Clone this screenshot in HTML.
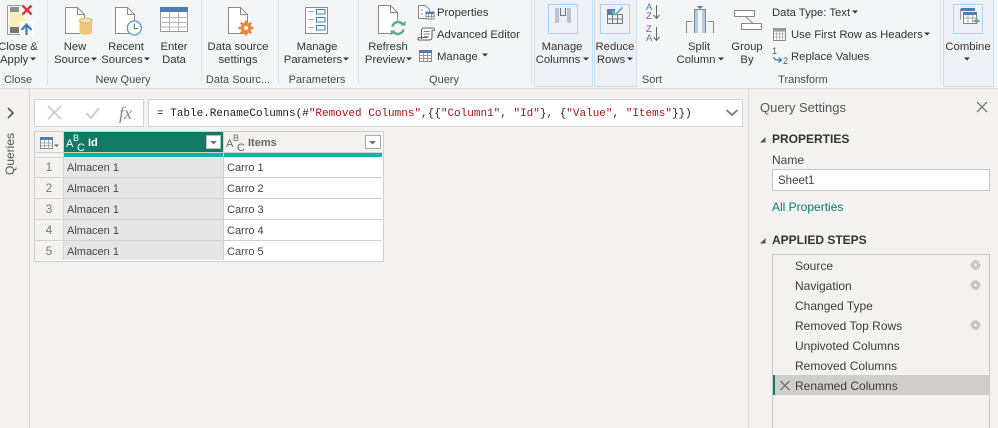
<!DOCTYPE html>
<html><head><meta charset="utf-8"><style>
html,body{margin:0;padding:0;width:998px;height:428px;overflow:hidden}
body{background:#f3f2f1;font-family:"Liberation Sans",sans-serif;color:#333}
#p{position:absolute;left:0;top:0;width:998px;height:428px;overflow:hidden;background:#f3f2f1}
.b{position:absolute}
.t{position:absolute;white-space:nowrap;line-height:16px;font-size:11.3px;color:#333;margin-top:1px}
.c{transform:translateX(-50%)}
.g{color:#4a4a4a;font-size:11px}
.tb{font-size:11px;color:#444}
.st{font-size:12px;left:795px;color:#3b3b3b;margin-top:0}
.n{font-size:12px;color:#777;left:34px;width:30px;text-align:center;margin-top:0}
.r{margin-top:0}
svg{position:absolute;left:0;top:0;overflow:visible}
svg text{font-family:"Liberation Sans",sans-serif}
</style></head><body><div id="p">
<div class="b" style="left:0;top:0;width:998px;height:88px;background:#f3f5f7;border-bottom:1px solid #dedede"></div>
<div class="b" style="left:534px;top:-1px;width:57px;height:86px;background:#eef2f6;border:1px solid #c5dff5"></div>
<div class="b" style="left:594px;top:-1px;width:41px;height:86px;background:#eef2f6;border:1px solid #c5dff5"></div>
<div class="b" style="left:943px;top:-1px;width:49px;height:86px;background:#eef2f6;border:1px solid #c5dff5"></div>
<div class="b" style="left:548px;top:4px;width:28px;height:28px;border:1px solid #a9d0f5"></div>
<div class="b" style="left:600px;top:4px;width:28px;height:28px;border:1px solid #a9d0f5"></div>
<div class="b" style="left:953px;top:4px;width:28px;height:28px;border:1px solid #a9d0f5"></div>
<div class="b" style="left:47px;top:0;width:1px;height:85px;background:#e1e3e5"></div>
<div class="b" style="left:201px;top:0;width:1px;height:85px;background:#e1e3e5"></div>
<div class="b" style="left:278px;top:0;width:1px;height:85px;background:#e1e3e5"></div>
<div class="b" style="left:358px;top:0;width:1px;height:85px;background:#e1e3e5"></div>
<div class="b" style="left:531px;top:0;width:1px;height:85px;background:#e1e3e5"></div>
<div class="b" style="left:940px;top:0;width:1px;height:85px;background:#e1e3e5"></div>
<div class="b" style="left:29px;top:89px;width:1px;height:339px;background:#d6d6d6"></div>
<div class="b" style="left:748px;top:89px;width:1px;height:339px;background:#d6d6d6"></div>

<div class="t c" style="left:18px;top:38px">Close &amp;</div>
<div class="t" style="left:0;top:51px">Apply</div>
<div class="t c" style="left:75px;top:38px">New</div>
<div class="t c" style="left:72px;top:51px">Source</div>
<div class="t c" style="left:126px;top:38px">Recent</div>
<div class="t c" style="left:122px;top:51px">Sources</div>
<div class="t c" style="left:174px;top:38px">Enter</div>
<div class="t c" style="left:174px;top:51px">Data</div>
<div class="t c" style="left:238px;top:38px">Data source</div>
<div class="t c" style="left:238px;top:51px">settings</div>
<div class="t c" style="left:317px;top:38px">Manage</div>
<div class="t c" style="left:313px;top:51px">Parameters</div>
<div class="t c" style="left:388px;top:38px">Refresh</div>
<div class="t c" style="left:385px;top:51px">Preview</div>
<div class="t" style="left:437px;top:4px">Properties</div>
<div class="t" style="left:437px;top:26px">Advanced Editor</div>
<div class="t" style="left:437px;top:48px">Manage</div>
<div class="t c" style="left:562px;top:38px">Manage</div>
<div class="t c" style="left:558px;top:51px">Columns</div>
<div class="t c" style="left:615px;top:38px">Reduce</div>
<div class="t c" style="left:611px;top:51px">Rows</div>
<div class="t c" style="left:699px;top:38px">Split</div>
<div class="t c" style="left:696px;top:51px">Column</div>
<div class="t c" style="left:747px;top:38px">Group</div>
<div class="t c" style="left:747px;top:51px">By</div>
<div class="t" style="left:772px;top:4px">Data Type: Text</div>
<div class="t" style="left:791px;top:26px">Use First Row as Headers</div>
<div class="t" style="left:791px;top:48px">Replace Values</div>
<div class="t c" style="left:968px;top:38px">Combine</div>

<div class="t c g" style="left:18px;top:71px">Close</div>
<div class="t c g" style="left:123px;top:71px">New Query</div>
<div class="t c g" style="left:238px;top:71px">Data Sourc...</div>
<div class="t c g" style="left:317px;top:71px">Parameters</div>
<div class="t c g" style="left:444px;top:71px">Query</div>
<div class="t c g" style="left:652px;top:71px">Sort</div>
<div class="t c g" style="left:803px;top:71px">Transform</div>

<!-- left rail -->
<div class="t r" style="left:-13px;top:146px;width:46px;text-align:center;transform:rotate(-90deg);font-size:12px;color:#555">Queries</div>

<!-- formula bar -->
<div class="b" style="left:34px;top:99px;width:108px;height:26px;background:#fff;border:1px solid #d2d2d2"></div>
<div class="b" style="left:148px;top:99px;width:593px;height:26px;background:#fff;border:1px solid #d2d2d2"></div>
<div class="b" style="left:157px;top:106px;font:11px/16px 'Liberation Mono',monospace;white-space:pre;color:#222">= Table.RenameColumns(#<span style="color:#a31515">"Removed Columns"</span>,{{<span style="color:#a31515">"Column1"</span>, <span style="color:#a31515">"Id"</span>}, {<span style="color:#a31515">"Value"</span>, <span style="color:#a31515">"Items"</span>}})</div>
<div class="t r" style="left:119px;top:104px;font:italic 18px/18px 'Liberation Serif',serif;color:#888">fx</div>

<!-- table -->
<div class="b" style="left:34px;top:131px;width:348px;height:129px;background:#fff;border:1px solid #cfcfcf"></div>
<div class="b" style="left:35px;top:132px;width:28px;height:20px;background:#f3f2f1"></div>
<div class="b" style="left:224px;top:132px;width:158px;height:20px;background:#f3f2f1"></div>
<div class="b" style="left:35px;top:152px;width:347px;height:1px;background:#d2d2d2"></div>
<div class="b" style="left:35px;top:153px;width:28px;height:4px;background:#f3f2f1;border-bottom:1px solid #d2d2d2"></div>
<div class="b" style="left:63px;top:132px;width:160px;height:20px;background:#127a63"></div>
<div class="b" style="left:64px;top:153px;width:318px;height:4px;background:#01b8aa"></div>
<div class="b" style="left:64px;top:158px;width:159px;height:102px;background:#e6e6e6"></div>
<div class="b" style="left:35px;top:158px;width:28px;height:102px;background:#f3f2f1"></div>
<div class="b" style="left:35px;top:177px;width:347px;height:1px;background:#d2d2d2"></div>
<div class="b" style="left:35px;top:198px;width:347px;height:1px;background:#d2d2d2"></div>
<div class="b" style="left:35px;top:219px;width:347px;height:1px;background:#d2d2d2"></div>
<div class="b" style="left:35px;top:240px;width:347px;height:1px;background:#d2d2d2"></div>
<div class="b" style="left:63px;top:132px;width:1px;height:128px;background:#d2d2d2"></div>
<div class="b" style="left:223px;top:132px;width:1px;height:128px;background:#d2d2d2"></div>
<div class="b" style="left:206px;top:135px;width:13px;height:12px;background:#fff;border:1px solid #bbb"></div>
<div class="b" style="left:365px;top:135px;width:14px;height:12px;background:#fff;border:1px solid #aaa"></div>
<div class="t" style="left:88px;top:134px;font-size:11px;font-weight:bold;color:#fff">Id</div>
<div class="t" style="left:248px;top:134px;font-size:11px;font-weight:bold;color:#666">Items</div>
<div class="t n" style="top:159px">1</div><div class="t n" style="top:180px">2</div><div class="t n" style="top:201px">3</div><div class="t n" style="top:222px">4</div><div class="t n" style="top:243px">5</div>
<div class="t tb" style="left:67px;top:159px">Almacen 1</div><div class="t tb" style="left:227px;top:159px">Carro 1</div>
<div class="t tb" style="left:67px;top:180px">Almacen 1</div><div class="t tb" style="left:227px;top:180px">Carro 2</div>
<div class="t tb" style="left:67px;top:201px">Almacen 1</div><div class="t tb" style="left:227px;top:201px">Carro 3</div>
<div class="t tb" style="left:67px;top:222px">Almacen 1</div><div class="t tb" style="left:227px;top:222px">Carro 4</div>
<div class="t tb" style="left:67px;top:243px">Almacen 1</div><div class="t tb" style="left:227px;top:243px">Carro 5</div>

<!-- right panel -->
<div class="t" style="left:760px;top:99px;font-size:13px;color:#555">Query Settings</div>
<div class="t r" style="left:772px;top:131px;font-size:12px;font-weight:bold;color:#333">PROPERTIES</div>
<div class="t r" style="left:772px;top:152px;font-size:12px;color:#444">Name</div>
<div class="b" style="left:772px;top:169px;width:216px;height:20px;background:#fff;border:1px solid #c8c8c8"></div>
<div class="t" style="left:778px;top:172px;font-size:11.5px;color:#444">Sheet1</div>
<div class="t r" style="left:772px;top:199px;font-size:12px;color:#11776a">All Properties</div>
<div class="t r" style="left:772px;top:232px;font-size:12px;font-weight:bold;color:#333">APPLIED STEPS</div>
<div class="b" style="left:772px;top:254px;width:216px;height:180px;border:1px solid #c8c8c8"></div>
<div class="b" style="left:773px;top:375px;width:216px;height:20px;background:#cfcecd"></div>
<div class="b" style="left:773px;top:375px;width:2px;height:20px;background:#0f7a66"></div>
<div class="t st" style="top:258px">Source</div>
<div class="t st" style="top:278px">Navigation</div>
<div class="t st" style="top:298px">Changed Type</div>
<div class="t st" style="top:318px">Removed Top Rows</div>
<div class="t st" style="top:338px">Unpivoted Columns</div>
<div class="t st" style="top:358px">Removed Columns</div>
<div class="t st" style="top:378px">Renamed Columns</div>

<svg width="998" height="428" viewBox="0 0 998 428" fill="none">
<defs>
<g id="cr"><path d="M-3 -1.5h6L0 1.5z" fill="#333"/></g>
<g id="gear"><path d="M-1.500 -5h3v10h-3zM-5 -1.500h10v3h-10z" fill="#c4c4c4"/><path d="M-3.500 -3.500l7 7M3.500 -3.500l-7 7" stroke="#c4c4c4" stroke-width="2"/><circle r="3.400" fill="#c4c4c4"/><circle r="1.500" fill="#f3f2f1"/></g>
</defs>
<use href="#cr" x="33" y="59"/><use href="#cr" x="94" y="59"/><use href="#cr" x="147" y="59"/><use href="#cr" x="346" y="59"/><use href="#cr" x="409" y="59"/><use href="#cr" x="485" y="55"/><use href="#cr" x="586" y="59"/><use href="#cr" x="630" y="59"/><use href="#cr" x="721" y="59"/><use href="#cr" x="855" y="12"/><use href="#cr" x="927" y="34"/><use href="#cr" x="967" y="59"/>

<!-- close & apply -->
<path d="M7.500 5.500h14M7.500 5.500v29h14" stroke="#999"/>
<path d="M10 12h9v15h-9z M19 27l9-9v9z" fill="#fdeeb5"/><path d="M19 12v15l7-7-7-8z" fill="#fdeeb5"/>
<rect x="10" y="7" width="9" height="5" fill="#8f8f8f"/><rect x="10" y="27" width="9" height="6" fill="#777"/>
<rect x="20" y="21" width="13" height="15" fill="#fbfbfb"/>
<path d="M22.500 5.500l9 9M31.500 5.500l-9 9" stroke="#d13438" stroke-width="2.400"/>
<path d="M26.500 35V26M21.500 30l5-5.500 5 5.500" stroke="#3f7cb8" stroke-width="2.200"/>

<!-- new source -->
<path d="M65.500 7.500h12l7 7v19h-19z" fill="#fff" stroke="#8a8a8a"/><path d="M77.500 7.500v7h7" stroke="#8a8a8a"/>
<path d="M79.500 20.500v12c0 3 12.500 3 12.500 0v-12z" fill="#eec67f"/><ellipse cx="85.700" cy="20.500" rx="6.300" ry="2.500" fill="#f6dfb0" stroke="#e3b263"/>
<!-- recent -->
<path d="M115.500 7.500h12l7 7v19h-19z" fill="#fff" stroke="#8a8a8a"/><path d="M127.500 7.500v7h7" stroke="#8a8a8a"/>
<circle cx="134.300" cy="28" r="7" fill="#fff" stroke="#5f93c4" stroke-width="1.300"/><path d="M134.300 23.500V28.500H138" stroke="#666"/>
<!-- enter data -->
<rect x="160.500" y="7.500" width="27" height="24" fill="#fff" stroke="#999"/><rect x="160" y="7" width="28" height="5" fill="#4d7fb5"/>
<path d="M160 17.500h28M160 22.500h28M160 27h28M169.500 12v19M178.500 12v19" stroke="#b5b5b5"/>
<!-- ds settings -->
<path d="M228.500 7.500h12l7 7v19h-19z" fill="#fff" stroke="#8a8a8a"/><path d="M240.500 7.500v7h7" stroke="#8a8a8a"/>
<circle cx="246" cy="28" r="4" stroke="#e88a3c" stroke-width="3"/><path d="M246 20.500v15M238.500 28h15M240.700 22.700l10.600 10.600M251.300 22.700l-10.600 10.600" stroke="#e88a3c" stroke-width="2.400"/><circle cx="246" cy="28" r="2" fill="#fff"/>
<!-- params -->
<rect x="305.500" y="7.500" width="22" height="26" fill="#fff" stroke="#8a8a8a"/>
<rect x="316.500" y="9.500" width="8.500" height="4.500" stroke="#3f7cb8"/><rect x="316.500" y="17.500" width="8.500" height="4.500" stroke="#3f7cb8"/><rect x="316.500" y="25.500" width="8.500" height="4.500" stroke="#3f7cb8"/>
<path d="M308 11.500h6M308 19.500h6M308 27.500h6" stroke="#aaa"/>
<!-- refresh -->
<path d="M378.500 5.500h12l7 7v21h-19z" fill="#fff" stroke="#8a8a8a"/><path d="M390.500 5.500v7h7" stroke="#8a8a8a"/>
<circle cx="398" cy="28" r="7.500" fill="#f3f5f7"/>
<path d="M392.500 26.500a5.800 5.800 0 0 1 10-2.500M403.500 29.500a5.800 5.800 0 0 1-10 2.500" stroke="#5fa893" stroke-width="2.400"/>
<path d="M400.500 25.500h5v-5zM395.500 30.500h-5v5z" fill="#5fa893"/>
<!-- properties icon -->
<path d="M418.500 5.500h7l4 4v9h-11z" fill="#fff" stroke="#8a8a8a"/><path d="M421 10h2M421 14h2" stroke="#888"/>
<rect x="426" y="12" width="8" height="7" fill="#fff" stroke="#888"/><rect x="426" y="12" width="8" height="2" fill="#4d7fb5"/><path d="M428.500 14v5M431.500 14v5M426 16.500h8" stroke="#999"/>
<!-- advanced -->
<path d="M421.500 39V30a2 2 0 0 1 2-2h9.500a1.500 1.500 0 0 1 1 2.500h-2V37c0 3-2 3-3 3H419c-1 0-1.500-1-.5-2.500h9" fill="#fff" stroke="#666" stroke-width="1.100"/>
<path d="M424 31.500h6M424 34h6M424 36.500h5" stroke="#888"/>
<!-- manage -->
<rect x="419.500" y="50.500" width="12" height="11" fill="#fff" stroke="#888"/><rect x="419" y="50" width="13" height="3" fill="#4d7fb5"/><path d="M423.500 53v8M427.500 53v8M419.500 55.500h12M419.500 58.500h12" stroke="#999"/>
<!-- manage columns -->
<rect x="555" y="8" width="4" height="15" fill="#b7c4d1"/><rect x="567" y="8" width="4" height="15" fill="#b7c4d1"/><rect x="559" y="8" width="8" height="15" fill="#e8edf2"/>
<path d="M560.500 8v7.500h5V8" stroke="#777"/>
<!-- reduce rows -->
<rect x="607" y="9" width="8" height="5" fill="#4d7fb5"/>
<path d="M607.500 14.500h15v9h-15zM607.500 19h15M612.500 14.500v9M617.500 14.500v9" stroke="#777"/>
<path d="M612 11l3.500 3.500 7-7" stroke="#6cc0a8" stroke-width="2"/>
<!-- sort -->
<text x="646" y="10" font-size="9.500" fill="#3f7cb8">A</text><text x="646" y="19" font-size="9.500" fill="#7d4fa8">Z</text>
<path d="M656.500 5v13M653.500 15l3 3.500 3-3.500" stroke="#666"/>
<text x="646" y="32" font-size="9.500" fill="#7d4fa8">Z</text><text x="646" y="41" font-size="9.500" fill="#3f7cb8">A</text>
<path d="M656.500 27v13M653.500 37l3 3.500 3-3.500" stroke="#666"/>
<!-- split -->
<rect x="695" y="9" width="3" height="24" fill="#b7cde3"/><rect x="702" y="9" width="3" height="24" fill="#b7cde3"/>
<path d="M694.500 33V9.500h11V33M686.500 33V21.500h6M713.500 33V21.500h-6" stroke="#888"/>
<path d="M697 6h6l-3 3z" fill="#3f7cb8"/>
<!-- group by -->
<rect x="734.500" y="10.500" width="20" height="6" fill="#fff" stroke="#888"/><rect x="741.500" y="23.500" width="20" height="6" fill="#fff" stroke="#888"/><path d="M746 17l7 6.500" stroke="#888"/>
<!-- first row -->
<rect x="773.500" y="28.500" width="12" height="12" fill="#fff" stroke="#888"/><rect x="773.500" y="28.500" width="12" height="3" fill="#999"/><path d="M776.500 28v12M779.500 28v12M782.500 28v12M773.500 34h12M773.500 37h12" stroke="#aaa" stroke-width=".8"/>
<!-- replace -->
<text x="772" y="54" font-size="9" fill="#555">1</text><text x="783" y="64" font-size="9" fill="#555">2</text>
<path d="M774 57c0 3 2 3 7 3M778.500 57.500l3 2.500-3 2.500" stroke="#3f7cb8" stroke-width="1.300"/>
<!-- combine -->
<rect x="961" y="8" width="14" height="3" fill="#4d7fb5"/><path d="M960.500 8.500v11" stroke="#999"/>
<rect x="963.500" y="12.500" width="13" height="11" fill="#fff" stroke="#888"/><rect x="963" y="12" width="14" height="3" fill="#4d7fb5"/><path d="M963.500 18h13M968 15v8M972.500 15v8" stroke="#aaa"/>
<path d="M976.500 18v6M973.500 21h6" stroke="#5fa893" stroke-width="2"/>

<!-- rail chevron -->
<path d="M8 108l5 5-5 5" stroke="#555" stroke-width="1.600"/>
<!-- formula btns -->
<path d="M48 106l13 13M61 106l-13 13" stroke="#c9c9c9" stroke-width="1.600"/>
<path d="M86 113l5 5 8-10" stroke="#c9c9c9" stroke-width="1.800"/>
<path d="M726.500 110l5.500 5 5.500-5" stroke="#777" stroke-width="1.800"/>
<!-- table icons -->
<rect x="40.500" y="137.500" width="12" height="11" fill="#fff" stroke="#888"/><rect x="40" y="137" width="13" height="3" fill="#4d7fb5"/><path d="M44.500 140v8M48.500 140v8M40.500 143h12M40.500 145.800h12" stroke="#999" stroke-width=".8"/>
<path d="M54 144.500h5l-2.500 2.500z" fill="#666"/>
<text x="66" y="147" font-size="11" fill="#fff">A</text><text x="73" y="141" font-size="9" fill="#fff">B</text><text x="77" y="151" font-size="11" fill="#fff">C</text>
<text x="226" y="147" font-size="11" fill="#666">A</text><text x="233" y="141" font-size="9" fill="#666">B</text><text x="237" y="151" font-size="11" fill="#666">C</text>
<path d="M210 141h7l-3.500 3.500z" fill="#777"/><path d="M369 141h7l-3.500 3.500z" fill="#777"/>
<!-- settings -->
<path d="M977 102l10 10M987 102l-10 10" stroke="#666" stroke-width="1.200"/>
<path d="M760 142.500h5.500v-5.500z" fill="#555"/><path d="M760 243.500h5.500v-5.500z" fill="#555"/>
<use href="#gear" x="975.500" y="265"/><use href="#gear" x="975.500" y="285"/><use href="#gear" x="975.500" y="325"/>
<path d="M780.500 381l9 9M789.500 381l-9 9" stroke="#666" stroke-width="1.200"/>
</svg>
</div></body></html>
